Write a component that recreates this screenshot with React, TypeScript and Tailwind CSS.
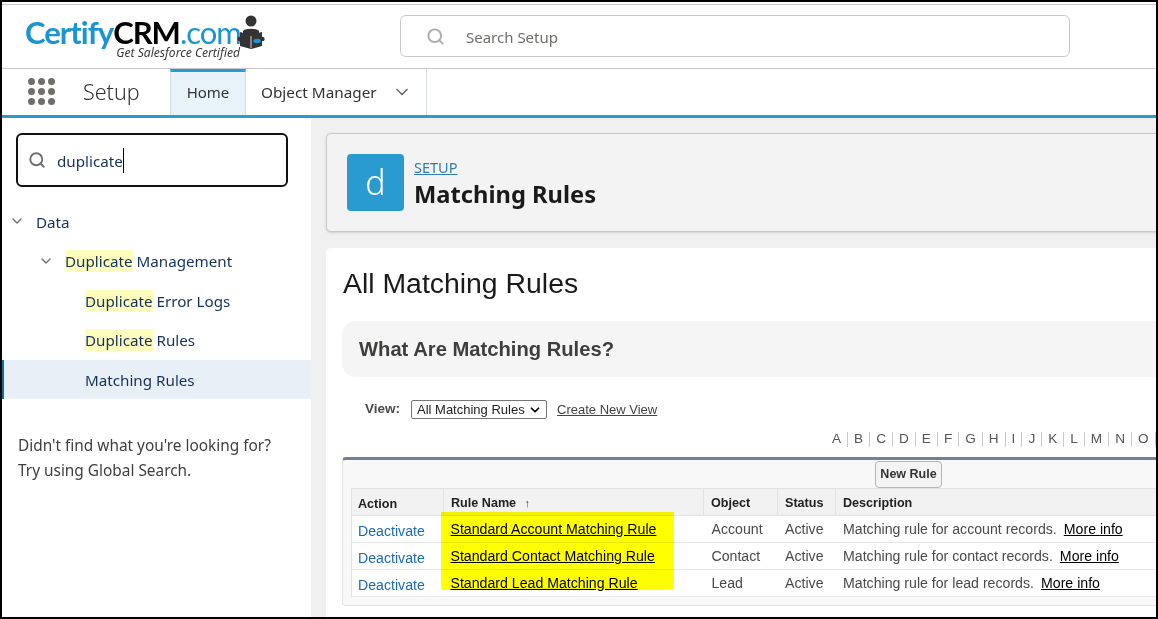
import { ChevronDown, Search } from "lucide-react";
import type { ReactNode } from "react";

const ui = "font-['Noto_Sans',sans-serif]";
const letters = ["A", "B", "C", "D", "E", "F", "G", "H", "I", "J", "K", "L", "M", "N", "O"];

const rules = [
  { name: "Standard Account Matching Rule", object: "Account", desc: "Matching rule for account records." },
  { name: "Standard Contact Matching Rule", object: "Contact", desc: "Matching rule for contact records." },
  { name: "Standard Lead Matching Rule", object: "Lead", desc: "Matching rule for lead records." },
];

function Logo() {
  return (
    <div className="flex items-start">
      <div className="flex w-[212px] flex-col items-end">
        <div className="w-full whitespace-nowrap font-['Lato',sans-serif] text-[31px] leading-[30px] font-bold tracking-[-1px] text-[#1a94d2]">
          Certify<span className="text-black">CRM</span>
          <span className="font-normal">.com</span>
        </div>
        <div className={`${ui} -mr-[3px] text-[12.1px] leading-[12px] italic text-[#3a3a3a]`}>Get Salesforce Certified</div>
      </div>
      <svg viewBox="0 0 28 36" className="-mt-[2px] h-[36px] w-[28px]">
        <circle cx="14" cy="6" r="5.5" fill="#333" />
        <path d="M6 16c2-3 14-3 16 0v4H6z" fill="#333" />
        <path d="M3 17l11 3 11-3v14l-11 3-11-3z" fill="#333" />
        <circle cx="2.5" cy="24" r="2.2" fill="#333" />
        <circle cx="25.5" cy="24" r="2.2" fill="#333" />
        <path d="M14 21v12" stroke="#fff" strokeWidth="0.8" />
        <ellipse cx="20" cy="26" rx="3.8" ry="2.2" fill="#1a94d2" />
      </svg>
    </div>
  );
}

function Highlight({ children }: { children: string }) {
  return <span className="bg-[#fdfdbd] py-[1px]">{children}</span>;
}

function TreeRow({ indent, open, active, children }: { indent: string; open?: boolean; active?: boolean; children: ReactNode }) {
  return (
    <div className={`flex h-[39.5px] items-center ${indent} ${active ? "border-l-2 border-[#0b6fa8] bg-[#e8eff6]" : ""}`}>
      {open && <ChevronDown className="mr-[11px] h-[16px] w-[16px] text-[#706e6b]" strokeWidth={2} />}
      <span className="pt-[2px]">{children}</span>
    </div>
  );
}

function Sidebar() {
  return (
    <aside className={`${ui} w-[309px] shrink-0 bg-white text-[15.2px] text-[#16325c]`}>
      <div className="ml-[14px] mt-[15px] flex h-[54px] w-[272px] items-center rounded-[6px] border-2 border-[#111] pl-[10px]">
        <Search className="h-[18px] w-[18px] text-[#706e6b]" strokeWidth={2.5} />
        <span className="ml-[11px] border-r border-black pt-[1px] leading-[24px] text-[#16325c]">duplicate</span>
      </div>
      <div className="mt-[14.5px]">
        <TreeRow indent="pl-[7px]" open>Data</TreeRow>
        <TreeRow indent="pl-[36px]" open><Highlight>Duplicate</Highlight> Management</TreeRow>
        <TreeRow indent="pl-[83px]"><Highlight>Duplicate</Highlight> Error Logs</TreeRow>
        <TreeRow indent="pl-[83px]"><Highlight>Duplicate</Highlight> Rules</TreeRow>
        <TreeRow indent="pl-[81px]" active>Matching Rules</TreeRow>
      </div>
      <p className="mt-[34px] pl-[16px] text-[15.4px] leading-[25px] text-[#3e3e3c]">
        Didn't find what you're looking for?
        <br />
        Try using Global Search.
      </p>
    </aside>
  );
}

function RulesTable() {
  return (
    <table className="w-full table-fixed border-collapse border-l border-t border-[#e0e3e5] text-[14.15px] leading-[16px]">
      <colgroup>
        <col className="w-[92px]" />
        <col className="w-[260px]" />
        <col className="w-[74px]" />
        <col className="w-[58px]" />
        <col />
      </colgroup>
      <thead>
        <tr className="h-[27px] border-b border-[#e0e3e5] bg-[#f2f2f2] text-left text-[12.6px] font-bold text-[#222]">
          <th className="px-[6px] pt-[4px]">Action</th>
          <th className="border-l border-[#e0e3e5] px-[7px] pt-[1px]">
            Rule Name <span className="ml-[5px] text-[11px] text-[#444]">↑</span>
          </th>
          <th className="border-l border-[#e0e3e5] px-[7px] pt-[1px]">Object</th>
          <th className="border-l border-[#e0e3e5] px-[7px] pt-[1px]">Status</th>
          <th className="border-l border-[#e0e3e5] px-[7px] pt-[1px]">Description</th>
        </tr>
      </thead>
      <tbody className="bg-white text-[#4a4a4a]">
        {rules.map((r) => (
          <tr key={r.name} className="h-[27px] border-b border-[#e5e7e8]">
            <td className="px-[6px] pt-[4px] text-[#1b6ab5]">Deactivate</td>
            <td className="pl-[7px] text-black underline">{r.name}</td>
            <td className="pl-[8px]">{r.object}</td>
            <td className="pl-[7.5px]">Active</td>
            <td className="whitespace-nowrap pl-[7.5px]">
              {r.desc}
              <span className="ml-[7px] text-black underline">More info</span>
            </td>
          </tr>
        ))}
      </tbody>
    </table>
  );
}

export default function App() {
  return (
    <div className="relative flex h-[619px] w-[1158px] flex-col overflow-hidden border-2 border-black bg-white">
      <header className="mt-[2px] flex h-[65px] shrink-0 items-start border-y border-[#c9c9c9] bg-white">
        <div className="ml-[23px] mt-[12px] w-[375px]">
          <Logo />
        </div>
        <div className={`${ui} mt-[10px] flex h-[42px] w-[670px] items-center rounded-[6px] border border-[#c9c9c9] pl-[25px] text-[15px] text-[#706e6b]`}>
          <Search className="h-[19px] w-[19px] text-[#b0adab]" strokeWidth={2.5} />
          <span className="ml-[21px] pt-[2px]">Search Setup</span>
        </div>
      </header>

      <nav className={`${ui} flex h-[49px] shrink-0 border-b-[3px] border-[#2a9bd1] text-[#16325c]`}>
        <div className="ml-[26px] mt-[9px] grid h-[27px] w-[27px] grid-cols-3 gap-[3.5px]">
          {Array.from({ length: 9 }).map((_, i) => (
            <span key={i} className="h-[6.5px] w-[6.5px] rounded-full bg-[#706e6b]" />
          ))}
        </div>
        <div className="ml-[28px] flex w-[87px] items-center pt-[1px] text-[21.5px] font-light text-[#333]">Setup</div>
        <div className="flex w-[76px] items-center justify-center border-x border-t-[3px] border-x-[#d8dde6] border-t-[#2a9bd1] bg-[#e8f2f9] pb-[2px] text-[15px] text-[#333]">Home</div>
        <div className="flex w-[181px] items-center border-r border-[#d8dde6] pl-[15px] text-[15.3px] text-[#333]">
          Object Manager
          <ChevronDown className="ml-[15px] h-[20px] w-[20px] text-[#706e6b]" strokeWidth={2} />
        </div>
      </nav>

      <div className="flex min-h-0 flex-1">
        <Sidebar />
        <main className="flex-1 overflow-hidden bg-[#f0f0f0] pl-[15px] pt-[15px]">
          <section className="flex h-[99px] w-[900px] items-center rounded-l-[5px] border border-r-0 border-[#c9c9c9] bg-[#f3f3f3] pl-[20px] shadow-sm">
            <div className={`${ui} flex h-[57px] w-[57px] items-center justify-center rounded-[4px] bg-[#2a9bd1] text-[34px] font-light text-white`}>d</div>
            <div className={`${ui} ml-[10px] pt-[3px]`}>
              <div className="text-[14.5px] leading-[20px] text-[#2e7fb0] underline">SETUP</div>
              <h1 className="text-[23.7px] leading-[34px] font-bold text-[#1a1a1a]">Matching Rules</h1>
            </div>
          </section>

          <section className="mt-[16px] h-[400px] w-[900px] rounded-tl-[5px] bg-white pl-[16px] font-['Liberation_Sans',sans-serif]">
            <h2 className="pl-[1px] pt-[18px] text-[28.4px] leading-[34px] text-[#1a1a1a]">All Matching Rules</h2>
            <div className="mt-[21px] flex h-[56px] items-center rounded-l-[14px] bg-[#f5f5f5] pl-[17px] text-[20.2px] font-bold text-[#3e3e3c]">What Are Matching Rules?</div>

            <div className="mt-[23px] flex h-[19px] items-center pl-[23px] text-[13px]">
              <span className="w-[46px] text-[13.5px] font-bold text-[#4a4a4a]">View:</span>
              <span className="flex h-[19px] w-[136px] items-center rounded-[2px] border border-[#767676] pl-[5px] text-[13px] leading-none text-[#222]">
                All Matching Rules
                <ChevronDown className="ml-[3px] h-[14px] w-[14px] text-black" strokeWidth={3} />
              </span>
              <span className="ml-[10px] text-[#444] underline">Create New View</span>
            </div>

            <div className="mt-[12px] flex h-[17px] items-center pl-[490px] text-[13.6px] text-[#555]">
              {letters.map((l, i) => (
                <span key={l} className={`flex h-[15px] items-center border-r border-[#c9c9c9] px-[6px] ${i === 0 ? "pl-0" : ""}`}>{l}</span>
              ))}
            </div>

            <div className="mt-[9px] h-[149px] rounded-[4px] border border-t-[3px] border-[#e3e3e3] border-t-[#747e96] bg-[#f8f8f8] pl-[8px]">
              <div className="flex h-[28px] items-start pl-[524px]">
                <button className="mt-[1px] h-[27px] w-[67px] rounded-[4px] border border-[#b5b5b5] bg-[#f4f4f4] text-[12.5px] font-bold text-[#333]">New Rule</button>
              </div>
              <RulesTable />
            </div>
          </section>
        </main>
      </div>

      <div className="absolute left-[439px] top-[510px] h-[78px] w-[233px] bg-[#ffff00] mix-blend-multiply" />
    </div>
  );
}
